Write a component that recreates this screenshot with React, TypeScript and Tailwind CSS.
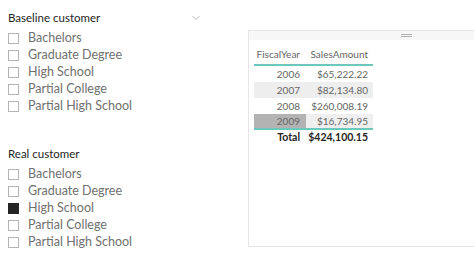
import { ChevronDown } from 'lucide-react'

const levels = ['Bachelors', 'Graduate Degree', 'High School', 'Partial College', 'Partial High School']

const rows = [
  { year: '2006', amount: '$65,222.22', row: '', cell: '' },
  { year: '2007', amount: '$82,134.80', row: 'bg-[#eeeeee]', cell: '' },
  { year: '2008', amount: '$260,008.19', row: '', cell: '' },
  { year: '2009', amount: '$16,734.95', row: 'bg-[#efefef]', cell: 'bg-[#b3b3b3]' },
]

function Slicer({ title, checked, chevron }: { title: string; checked?: string; chevron?: boolean }) {
  return (
    <div>
      <div className="flex h-[16px] items-center pr-[46px] text-[11.5px] leading-[16px] text-[#252525]">
        <span className="flex-1">{title}</span>
        {chevron && <ChevronDown className="h-[12px] w-[12px] text-[#8a8a8a]" strokeWidth={1.3} aria-hidden />}
      </div>
      <ul className="mt-[4px]">
        {levels.map((item) => (
          <li key={item} className="flex h-[17px] items-center gap-[9px] text-[12.5px] text-[#707070]">
            <span
              className={
                item === checked
                  ? 'h-[11px] w-[11px] bg-[#252525]'
                  : 'h-[11px] w-[11px] border border-[#b4b4b4] bg-white'
              }
            />
            <span>{item}</span>
          </li>
        ))}
      </ul>
    </div>
  )
}

export default function App() {
  return (
    <div className="flex h-[274px] w-[474px] overflow-hidden bg-white font-['Lato','Noto_Sans',sans-serif]">
      <div className="flex w-[248px] flex-col gap-[31px] pl-[8px] pt-[10px]">
        <Slicer title="Baseline customer" chevron />
        <Slicer title="Real customer" checked="High School" />
      </div>

      <div className="mt-[30px] h-[217px] flex-1 border border-r-0 border-[#e6e6e6]">
        <div className="flex h-[9px] items-center justify-center bg-[#f7f7f7] pl-[90px]">
          <div className="flex w-[11px] flex-col gap-[1px]">
            <span className="h-px bg-[#b0b0b0]" />
            <span className="h-px bg-[#b0b0b0]" />
          </div>
        </div>
        <div className="ml-[5px] mt-[4px] w-[119px] text-[10px] text-[#666666]">
          <div className="flex h-[22px] items-center border-b-2 border-[#6cc7bd]">
            <span className="w-[52px] pr-[6px] text-right">FiscalYear</span>
            <span className="w-[67px] pr-[5px] text-right">SalesAmount</span>
          </div>
          {rows.map((r, i) => (
            <div
              key={r.year}
              className={`flex h-[16px] items-center ${r.row} ${i === rows.length - 1 ? 'border-b-2 border-[#6cc7bd]' : ''}`}
            >
              <span className={`flex h-full w-[52px] items-center justify-end pr-[6px] ${r.cell}`}>{r.year}</span>
              <span className="w-[67px] pr-[5px] text-right">{r.amount}</span>
            </div>
          ))}
          <div className="flex h-[16px] items-center text-[10.5px] font-bold text-[#252525]">
            <span className="w-[52px] pr-[6px] text-right">Total</span>
            <span className="w-[67px] pr-[5px] text-right">$424,100.15</span>
          </div>
        </div>
      </div>
    </div>
  )
}
